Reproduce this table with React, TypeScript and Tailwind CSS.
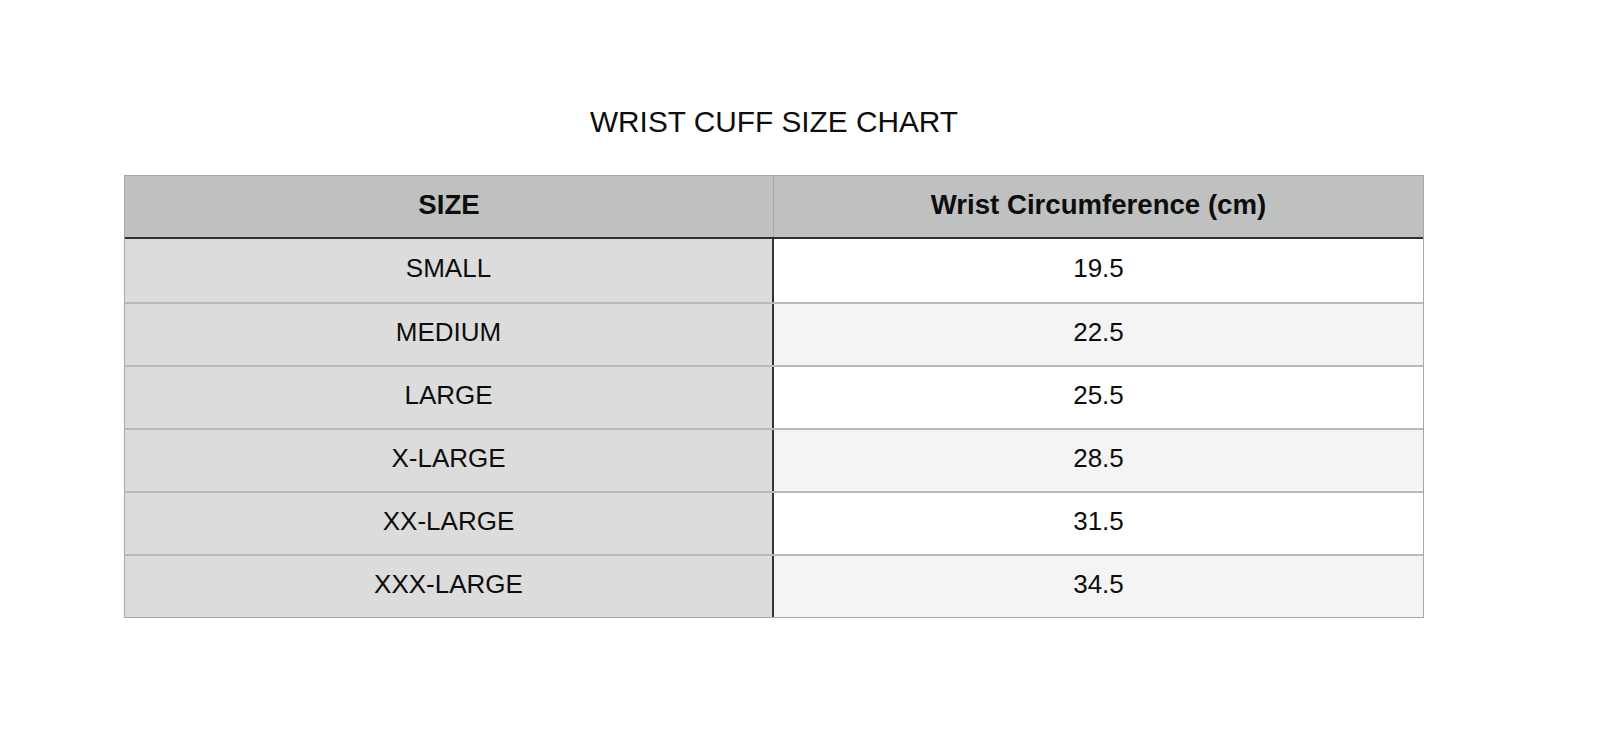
const rows = [
  { size: 'SMALL', cm: '19.5' },
  { size: 'MEDIUM', cm: '22.5' },
  { size: 'LARGE', cm: '25.5' },
  { size: 'X-LARGE', cm: '28.5' },
  { size: 'XX-LARGE', cm: '31.5' },
  { size: 'XXX-LARGE', cm: '34.5' },
]

export default function App() {
  return (
    <div className="w-[1600px] h-[751px] bg-white text-[#0d0d0d] font-['Liberation_Sans',Arial,sans-serif]">
      <div className="ml-[124px] w-[1300px] pt-[107px]">
        {/* Title */}
        <h1 className="h-[30px] text-center text-[29.8px] leading-[30px]">WRIST CUFF SIZE CHART</h1>

        {/* Table */}
        <div className="mt-[38px] border border-[#a8a8a8]">
          <div className="grid grid-cols-[649px_1fr] h-[63px] bg-[#bfc1c0] border-b-2 border-[#2e2e2e] font-bold text-[27.6px]">
            <div className="flex items-center justify-center pb-[3px] border-r border-[#a6a8a7]">SIZE</div>
            <div className="flex items-center justify-center pb-[3px]">Wrist Circumference (cm)</div>
          </div>
          {rows.map((r, i) => (
            <div
              key={r.size}
              className={`grid grid-cols-[649px_1fr] h-[63px] text-[26px] ${i > 0 ? 'border-t-2 border-[#bababa]' : ''}`}
            >
              <div className="flex items-center justify-center pb-[4px] bg-[#dcdcdc] border-r-2 border-[#333]">{r.size}</div>
              <div className={`flex items-center justify-center pb-[4px] ${i % 2 === 0 ? 'bg-white' : 'bg-[#f4f4f4]'}`}>{r.cm}</div>
            </div>
          ))}
        </div>
      </div>
    </div>
  )
}
